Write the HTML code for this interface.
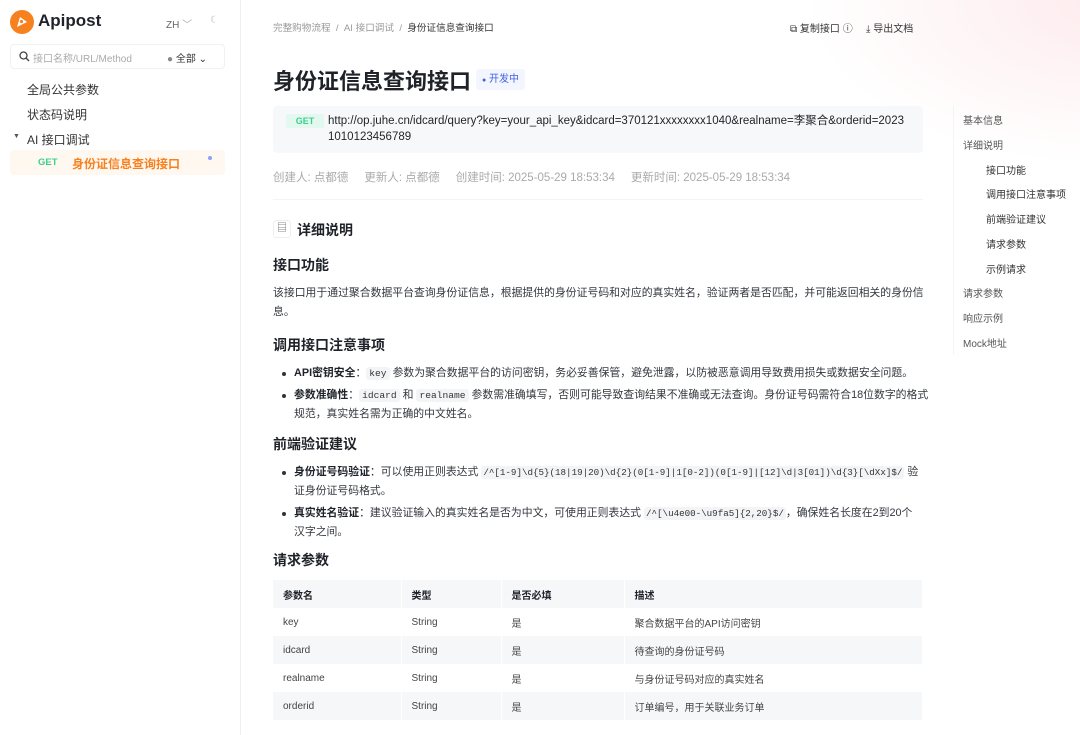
<!DOCTYPE html>
<html><head><meta charset="utf-8"><style>
*{margin:0;padding:0;box-sizing:border-box}
body{width:1080px;height:735px;overflow:hidden;font-family:"Liberation Sans","Noto Sans CJK SC",sans-serif;color:#1f2329;background:#fff;position:relative}
.a{position:absolute;white-space:nowrap}
.side{position:absolute;left:0;top:0;width:241px;height:735px;border-right:1px solid #eef0f3;background:#fff}
.glow{position:absolute;left:780px;top:-120px;width:420px;height:300px;background:radial-gradient(ellipse at 80% 40%,rgba(253,226,230,.7),rgba(255,255,255,0) 65%)}
code{font-family:"Liberation Mono",monospace;font-size:9.6px;background:#f3f4f6;border-radius:3px;padding:1px 3px;color:#333}
.p{font-size:10.85px;color:#33373d;line-height:19px}
ul{list-style:none}
li{position:relative;padding-left:21px;font-size:10.85px;line-height:19px;color:#33373d;margin-bottom:3px;white-space:nowrap}
li:before{content:"";position:absolute;left:9px;top:8px;width:4px;height:4px;border-radius:50%;background:#333}
b{font-weight:bold;color:#1f2329}
h3{font-size:14px;font-weight:bold;color:#1f2329}
table{border-collapse:collapse;width:650px;font-size:10px;color:#444}
td,th{height:28px;padding-left:10px;text-align:left;border-right:1px solid #fff}
th{font-weight:bold;color:#1f2329;background:#f6f7f9}
tr.g td{background:#f6f7f9}
.toc{font-size:10px;color:#555}
</style></head><body>
<div class="glow"></div>
<div class="side">
  <svg class="a" style="left:10px;top:10px" width="24" height="24" viewBox="0 0 24 24"><circle cx="12" cy="12" r="12" fill="#f7811e"/><path d="M7 17 L10 7 L17 12 Z" fill="#fff"/><circle cx="11.5" cy="11.5" r="1.6" fill="#f7811e"/></svg>
  <div class="a" style="left:38px;top:11px;font-size:17px;font-weight:bold;color:#1f2329">Apipost</div>
  <div class="a" style="left:166px;top:16px;font-size:10px;color:#666">ZH <span style="color:#aaa">﹀</span></div>
  <div class="a" style="left:210px;top:15px;font-size:10px;color:#bbb">☾</div>
  <div class="a" style="left:10px;top:44px;width:215px;height:25px;border:1px solid #f0f1f3;border-radius:4px"></div>
  <svg class="a" style="left:19px;top:51px" width="11" height="11" viewBox="0 0 11 11"><circle cx="4.5" cy="4.5" r="3.5" fill="none" stroke="#444" stroke-width="1.3"/><path d="M7 7 L10 10" stroke="#444" stroke-width="1.4"/></svg>
  <div class="a" style="left:33px;top:50px;font-size:10px;color:#aaa">接口名称/URL/Method</div>
  <div class="a" style="left:167px;top:50px;font-size:10px;color:#333"><span style="color:#888">●</span> 全部 ⌄</div>
  <div class="a" style="left:27px;top:81px;font-size:12px;color:#333">全局公共参数</div>
  <div class="a" style="left:27px;top:106px;font-size:12px;color:#333">状态码说明</div>
  <div class="a" style="left:13px;top:133px;font-size:7px;color:#555">▼</div>
  <div class="a" style="left:27px;top:131px;font-size:12px;color:#333">AI 接口调试</div>
  <div class="a" style="left:10px;top:150px;width:215px;height:25px;background:#fff8f1;border-radius:4px"></div>
  <div class="a" style="left:38px;top:157px;font-size:9.5px;font-weight:bold;color:#3ccf91">GET</div>
  <div class="a" style="left:72px;top:155px;font-size:12px;font-weight:bold;color:#f7811e">身份证信息查询接口</div>
  <div class="a" style="left:208px;top:156px;width:4px;height:4px;border-radius:50%;background:#8aa2ff"></div>
</div>

<div class="a" style="left:273px;top:20px;font-size:9.6px;color:#999">完整购物流程 &nbsp;/&nbsp; AI 接口调试 &nbsp;/&nbsp; <span style="color:#333">身份证信息查询接口</span></div>
<div class="a" style="left:790px;top:20px;font-size:10px;color:#333">⧉ 复制接口 ⓘ</div>
<div class="a" style="left:866px;top:20px;font-size:10px;color:#333">⤓ 导出文档</div>

<div class="a" style="left:273px;top:64px;font-size:22px;font-weight:bold;color:#1f2329">身份证信息查询接口</div>
<div class="a" style="left:476px;top:69px;height:21px;padding:0 6px;background:#f3f5ff;border-radius:3px;font-size:10px;line-height:21px;color:#3e63dd"><span style="font-size:7px">●</span> 开发中</div>

<div class="a" style="left:273px;top:106px;width:650px;height:47px;background:#f7f8fa;border-radius:4px"></div>
<div class="a" style="left:286px;top:114px;width:38px;height:14px;background:#e3f8ee;border-radius:2px;font-size:9px;font-weight:bold;color:#3ccf91;text-align:center;line-height:14px">GET</div>
<div class="a" style="left:328px;top:113px;font-size:11.5px;color:#1f2329;line-height:16px;white-space:normal;width:590px">http://op.juhe.cn/idcard/query?key=your_api_key&amp;idcard=370121xxxxxxxx1040&amp;realname=李聚合&amp;orderid=2023<br>1010123456789</div>

<div class="a" style="left:273px;top:169px;font-size:11.5px;color:#aaa">创建人: 点都德 &nbsp;&nbsp;&nbsp; 更新人: 点都德 &nbsp;&nbsp;&nbsp; 创建时间: 2025-05-29 18:53:34 &nbsp;&nbsp;&nbsp; 更新时间: 2025-05-29 18:53:34</div>
<div class="a" style="left:273px;top:199px;width:650px;height:1px;background:#f3f4f6"></div>

<div class="a" style="left:273px;top:220px;width:18px;height:18px;border:1px solid #eee;border-radius:3px;font-size:10px;text-align:center;line-height:16px;color:#666">▤</div>
<div class="a" style="left:297px;top:220px;font-size:14px;font-weight:bold">详细说明</div>
<h3 class="a" style="left:273px;top:255px">接口功能</h3>
<div class="a p" style="left:273px;top:284px">该接口用于通过聚合数据平台查询身份证信息，根据提供的身份证号码和对应的真实姓名，验证两者是否匹配，并可能返回相关的身份信<br>息。</div>
<h3 class="a" style="left:273px;top:335px">调用接口注意事项</h3>
<ul class="a" style="left:273px;top:364px">
<li><b>API密钥安全</b>：<code>key</code> 参数为聚合数据平台的访问密钥，务必妥善保管，避免泄露，以防被恶意调用导致费用损失或数据安全问题。</li>
<li><b>参数准确性</b>：<code>idcard</code> 和 <code>realname</code> 参数需准确填写，否则可能导致查询结果不准确或无法查询。身份证号码需符合18位数字的格式<br>规范，真实姓名需为正确的中文姓名。</li>
</ul>
<h3 class="a" style="left:273px;top:434px">前端验证建议</h3>
<ul class="a" style="left:273px;top:463px">
<li><b>身份证号码验证</b>：可以使用正则表达式 <code style="font-size:9.2px;padding:1px 2px">/^[1-9]\d{5}(18|19|20)\d{2}(0[1-9]|1[0-2])(0[1-9]|[12]\d|3[01])\d{3}[\dXx]$/</code> 验<br>证身份证号码格式。</li>
<li><b>真实姓名验证</b>：建议验证输入的真实姓名是否为中文，可使用正则表达式 <code style="font-size:9.2px;padding:1px 2px">/^[\u4e00-\u9fa5]{2,20}$/</code>，确保姓名长度在2到20个<br>汉字之间。</li>
</ul>
<h3 class="a" style="left:273px;top:550px">请求参数</h3>
<table class="a" style="left:273px;top:580px">
<tr><th style="width:128px">参数名</th><th style="width:100px">类型</th><th style="width:123px">是否必填</th><th>描述</th></tr>
<tr><td>key</td><td>String</td><td>是</td><td>聚合数据平台的API访问密钥</td></tr>
<tr class="g"><td>idcard</td><td>String</td><td>是</td><td>待查询的身份证号码</td></tr>
<tr><td>realname</td><td>String</td><td>是</td><td>与身份证号码对应的真实姓名</td></tr>
<tr class="g"><td>orderid</td><td>String</td><td>是</td><td>订单编号，用于关联业务订单</td></tr>
</table>

<div class="a" style="left:953px;top:105px;width:1px;height:250px;background:#f3f4f6"></div>
<div class="a toc" style="left:963px;top:112px">基本信息</div>
<div class="a toc" style="left:963px;top:137px">详细说明</div>
<div class="a toc" style="left:986px;top:162px;color:#333">接口功能</div>
<div class="a toc" style="left:986px;top:186px;color:#333">调用接口注意事项</div>
<div class="a toc" style="left:986px;top:211px;color:#333">前端验证建议</div>
<div class="a toc" style="left:986px;top:236px;color:#333">请求参数</div>
<div class="a toc" style="left:986px;top:261px;color:#333">示例请求</div>
<div class="a toc" style="left:963px;top:285px">请求参数</div>
<div class="a toc" style="left:963px;top:310px">响应示例</div>
<div class="a toc" style="left:963px;top:335px">Mock地址</div>
</body></html>
